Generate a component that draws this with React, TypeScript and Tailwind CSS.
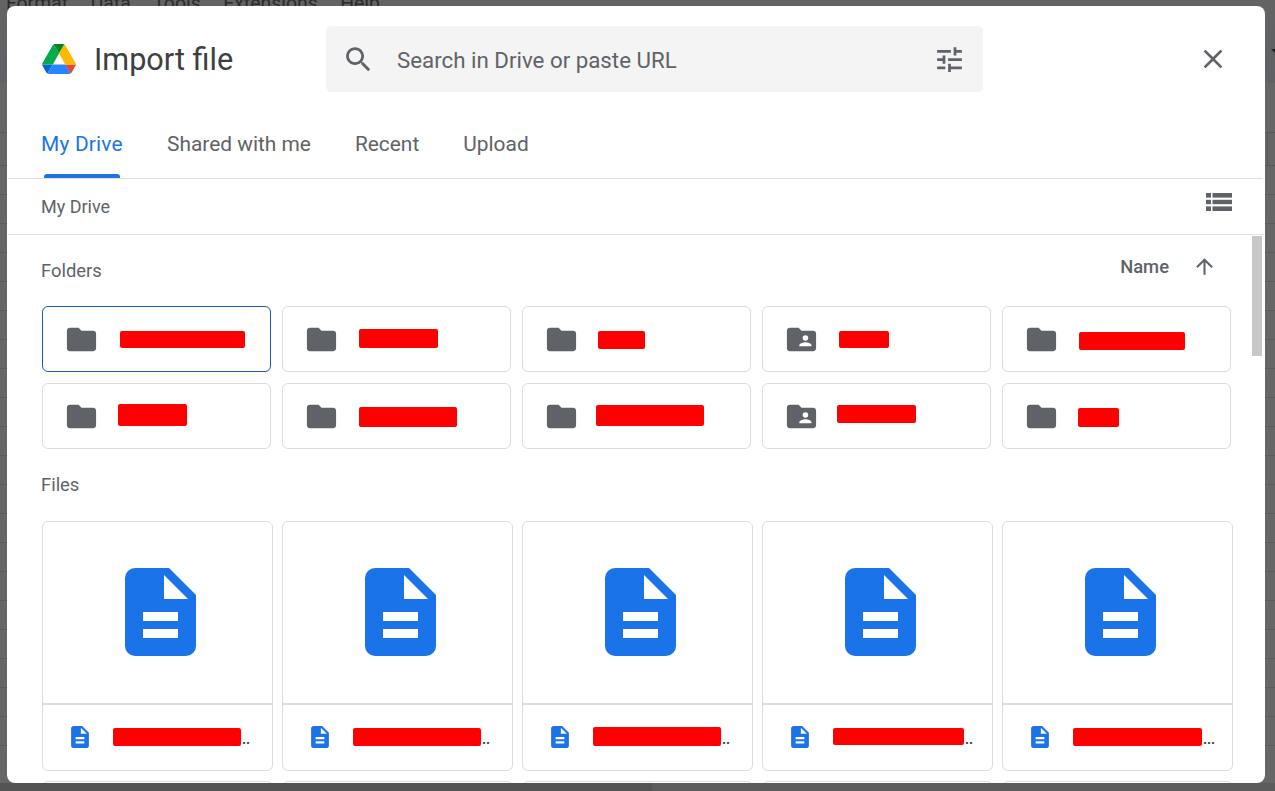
/** Import file dialog over a dimmed spreadsheet */
const FOLDERS = [
    { w: 125, h: 17, x: 77, y: 0, shared: false, focused: true },
    { w: 79, h: 19, x: 76, y: -1, shared: false },
    { w: 47, h: 18, x: 75, y: 1, shared: false },
    { w: 50, h: 17, x: 76, y: 0, shared: true },
    { w: 106, h: 18, x: 76, y: 2, shared: false },
    { w: 69, h: 22, x: 75, y: -1, shared: false },
    { w: 98, h: 20, x: 76, y: 1, shared: false },
    { w: 108, h: 21, x: 73, y: -1, shared: false },
    { w: 79, h: 18, x: 74, y: -2, shared: true },
    { w: 41, h: 19, x: 75, y: 1, shared: false },
];

const FILES = [
    { w: 128, h: 18, dots: '..' },
    { w: 128, h: 18, dots: '..' },
    { w: 128, h: 19, dots: '..' },
    { w: 131, h: 17, dots: '..' },
    { w: 129, h: 18, dots: '...' },
];

const MENU = ['Format', 'Data', 'Tools', 'Extensions', 'Help'];
const TABS = ['My Drive', 'Shared with me', 'Recent', 'Upload'];

function DriveLogo() {
    return (
        <svg viewBox="0 0 87.3 78" className="w-[34px] h-[30px] flex-none">
            <path d="m6.6 66.85 3.85 6.65c.8 1.4 1.95 2.5 3.3 3.3l13.75-23.8h-27.5c0 1.55.4 3.1 1.2 4.5z" fill="#0066da" />
            <path d="m43.65 25-13.75-23.8c-1.35.8-2.5 1.9-3.3 3.3l-25.4 44a9.06 9.06 0 0 0 -1.2 4.5h27.5z" fill="#00ac47" />
            <path d="m73.55 76.8c1.35-.8 2.5-1.9 3.3-3.3l1.6-2.75 7.65-13.25c.8-1.4 1.2-2.95 1.2-4.5h-27.502l5.852 11.5z" fill="#ea4335" />
            <path d="m43.65 25 13.75-23.8c-1.35-.8-2.9-1.2-4.5-1.2h-18.5c-1.6 0-3.15.45-4.5 1.2z" fill="#00832d" />
            <path d="m59.8 53h-32.3l-13.75 23.8c1.35.8 2.9 1.2 4.5 1.2h50.8c1.6 0 3.15-.45 4.5-1.2z" fill="#2684fc" />
            <path d="m73.4 26.5-12.7-22c-.8-1.4-1.95-2.5-3.3-3.3l-13.75 23.8 16.15 28h27.45c0-1.55-.4-3.1-1.2-4.5z" fill="#ffba00" />
        </svg>
    );
}

function FolderIcon({ shared }: { shared: boolean }) {
    return (
        <svg viewBox="0 0 24 24" className="w-[35px] h-[35px] flex-none">
            <path d="M10 4H4c-1.1 0-2 .9-2 2v12c0 1.1.9 2 2 2h16c1.1 0 2-.9 2-2V8c0-1.1-.9-2-2-2h-8l-2-2z" fill="#5f6368" />
            {shared && (
                <>
                    <circle cx="14.7" cy="10.9" r="1.9" fill="#fff" />
                    <path d="M10.5 16.7v-.9c0-1.3 2.8-2 4.2-2s4.1.7 4.1 2v.9z" fill="#fff" />
                </>
            )}
        </svg>
    );
}

function DocIcon({ className }: { className: string }) {
    return (
        <svg viewBox="0 0 71 88" className={className}>
            <path d="M10 0H44L71 27V78a10 10 0 0 1-10 10H10A10 10 0 0 1 0 78V10A10 10 0 0 1 10 0Z" fill="#1a73e8" />
            <path d="M39 7V31H63Z" fill="#fff" />
            <rect x="18" y="44" width="35" height="9" fill="#fff" />
            <rect x="18" y="61" width="35" height="9" fill="#fff" />
        </svg>
    );
}

function Redacted({ w, h, x, y }: { w: number; h: number; x: number; y: number }) {
    return <span className="block flex-none rounded-[2px] bg-[#ff0000]" style={{ width: w, height: h, marginLeft: x, marginTop: y * 2 }} />;
}

export default function App() {
    return (
        <div className="relative w-[1275px] h-[791px] overflow-hidden bg-[#666666] font-[Roboto,sans-serif]">
            {/* dimmed sheet behind the dialog */}
            <div className="flex flex-col h-full">
                <div className="h-[83px] flex-none bg-gradient-to-b from-[#636363] to-[#5f6165]">
                    <div className="flex gap-[22.5px] pl-[6px] -mt-[7px] text-[19.4px] leading-[22px] text-[#2b2b2b]">
                        {MENU.map(m => <span key={m}>{m}</span>)}
                    </div>
                </div>
                <div className="h-[50px] flex-none border-b border-[#565656]" />
                <div className="h-[33px] flex-none border-b border-[#565656]" />
                {Array.from({ length: 20 }).map((_, i) => (
                    <div key={i} className="h-[29px] flex-none border-b border-[#5a5a5a]" />
                ))}
            </div>
            <div className="absolute left-0 right-0 bottom-0 h-[8px] flex">
                <div className="w-[652px] bg-[#545454]" />
                <div className="flex-1 bg-[#5c5c5c]" />
            </div>
            <div className="absolute left-[1267px] top-[133px] w-px h-[33px] bg-[#565656]" />
            <div className="absolute left-[1271px] top-[49px] w-0 h-0 border-x-[4px] border-x-transparent border-t-[4px] border-t-[#222222]" />

            {/* dialog */}
            <div className="absolute left-[7px] top-[6px] w-[1258px] h-[777px] flex flex-col overflow-hidden rounded-[8px] bg-white text-[#5f6368]">
                <div className="flex items-center h-[66px] mt-[20px] mb-[20px] pl-[35px] flex-none">
                    <DriveLogo />
                    <div className="w-[232px] ml-[18px] pt-[1px] flex-none text-[#3c4043] text-[30.6px] leading-[36px]">Import file</div>
                    <div className="flex items-center w-[657px] h-[66px] flex-none rounded-[5px] bg-[#f4f4f4] pl-[16px]">
                        <svg viewBox="0 0 24 24" className="w-[33px] h-[33px] flex-none" fill="#5f6368">
                            <path d="M15.5 14h-.79l-.28-.27C15.41 12.59 16 11.11 16 9.5 16 5.91 13.09 3 9.5 3S3 5.91 3 9.5 5.91 16 9.5 16c1.61 0 3.09-.59 4.23-1.57l.27.28v.79l5 4.99L20.49 19l-4.99-5zm-6 0C7.01 14 5 11.99 5 9.5S7.01 5 9.5 5 14 7.01 14 9.5 11.99 14 9.5 14z" />
                        </svg>
                        <span className="ml-[22px] mt-[1px] text-[22.3px] leading-[28px]">Search in Drive or paste URL</span>
                        <svg viewBox="0 0 24 24" className="w-[33px] h-[33px] flex-none ml-auto mr-[17px]" fill="#5f6368">
                            <path d="M3 17v2h6v-2H3zM3 5v2h10V5H3zm10 16v-2h8v-2h-8v-2h-2v6h2zM7 9v2H3v2h4v2h2V9H7zm14 4v-2H11v2h10zm-6-4h2V7h4V5h-4V3h-2v6z" />
                        </svg>
                    </div>
                    <svg viewBox="0 0 24 24" className="w-[32px] h-[32px] flex-none ml-[214px]" fill="#5f6368">
                        <path d="M19 6.41L17.59 5 12 10.59 6.41 5 5 6.41 10.59 12 5 17.59 6.41 19 12 13.41 17.59 19 19 17.59 13.41 12z" />
                    </svg>
                </div>

                <div className="flex gap-[44px] h-[66px] pl-[34px] flex-none">
                    {TABS.map((t, i) => (
                        <div key={t} className={`relative flex items-center text-[20.9px] font-[450] ${i === 0 ? 'w-[82px] text-[#1a73e8] tracking-[0.2px]' : 'text-[#5f6368]'}`}>
                            {t}
                            {i === 0 && <span className="absolute left-[3px] right-[3px] bottom-0 h-[4px] rounded-t-[3px] bg-[#1a73e8]" />}
                        </div>
                    ))}
                </div>

                <div className="flex items-center h-[57px] ml-px mr-[2px] pl-[33px] pr-[31px] flex-none border-y border-[#e0e0e0]">
                    <span className="text-[18px] leading-[24px]">My Drive</span>
                    <svg viewBox="0 0 26 18" className="ml-auto mb-[10px] w-[26px] h-[18px]" fill="#5f6368">
                        <rect x="0" y="0" width="5" height="4.6" />
                        <rect x="6.5" y="0" width="19.5" height="4.6" />
                        <rect x="0" y="6.8" width="5" height="4.4" />
                        <rect x="6.5" y="6.8" width="19.5" height="4.4" />
                        <rect x="0" y="13.4" width="5" height="4.6" />
                        <rect x="6.5" y="13.4" width="19.5" height="4.6" />
                    </svg>
                </div>

                <div className="relative flex-1 overflow-hidden pl-[35px]">
                    <div className="absolute right-[3px] top-[1px] w-[10px] h-[120px] bg-[#c8c8c8]" />

                    <div className="flex items-center justify-between h-[71px] w-[1189px] pr-[14px]">
                        <span className="-ml-px pt-[1px] text-[18.4px]">Folders</span>
                        <div className="flex items-center mb-[7px]">
                            <span className="text-[18.4px] font-medium">Name</span>
                            <svg viewBox="0 0 24 24" className="w-[25px] h-[25px] ml-[23px]" fill="#5f6368">
                                <path d="M4 12l1.41 1.41L11 7.83V20h2V7.83l5.58 5.59L20 12l-8-8-8 8z" />
                            </svg>
                        </div>
                    </div>

                    <div className="grid grid-cols-[repeat(5,229px)] gap-[11px]">
                        {FOLDERS.map((f, i) => (
                            <div key={i} className={`flex items-center h-[66px] pl-[21px] rounded-[6px] border ${f.focused ? 'border-[#185abc]' : 'border-[#dadce0]'}`}>
                                <FolderIcon shared={f.shared} />
                                <Redacted w={f.w} h={f.h} x={f.x - 56} y={f.y} />
                            </div>
                        ))}
                    </div>

                    <div className="flex items-center h-[72px] -ml-px text-[18.4px]">Files</div>

                    <div className="grid grid-cols-[repeat(5,231px)] gap-x-[9px] gap-y-[10px]">
                        {[...FILES, ...FILES].map((f, i) => (
                            <div key={i} className="flex flex-col h-[250px] rounded-[6px] border border-[#dadce0]">
                                <div className="flex items-center justify-center h-[183px] flex-none pl-[6px] pb-[2px] border-b-2 border-[#dadce0]">
                                    <DocIcon className="w-[71px] h-[88px]" />
                                </div>
                                <div className="flex items-center flex-1 pl-[28px] pb-[2px]">
                                    <DocIcon className="w-[18px] h-[22px] flex-none" />
                                    <span className="block ml-[24px] flex-none rounded-[2px] bg-[#ff0000]" style={{ width: f.w, height: f.h }} />
                                    <span className="self-end mb-[20px] ml-[1px] text-[14px] leading-[18px] font-bold text-[#3c4043]">{f.dots}</span>
                                </div>
                            </div>
                        ))}
                    </div>
                </div>
            </div>
        </div>
    );
}
